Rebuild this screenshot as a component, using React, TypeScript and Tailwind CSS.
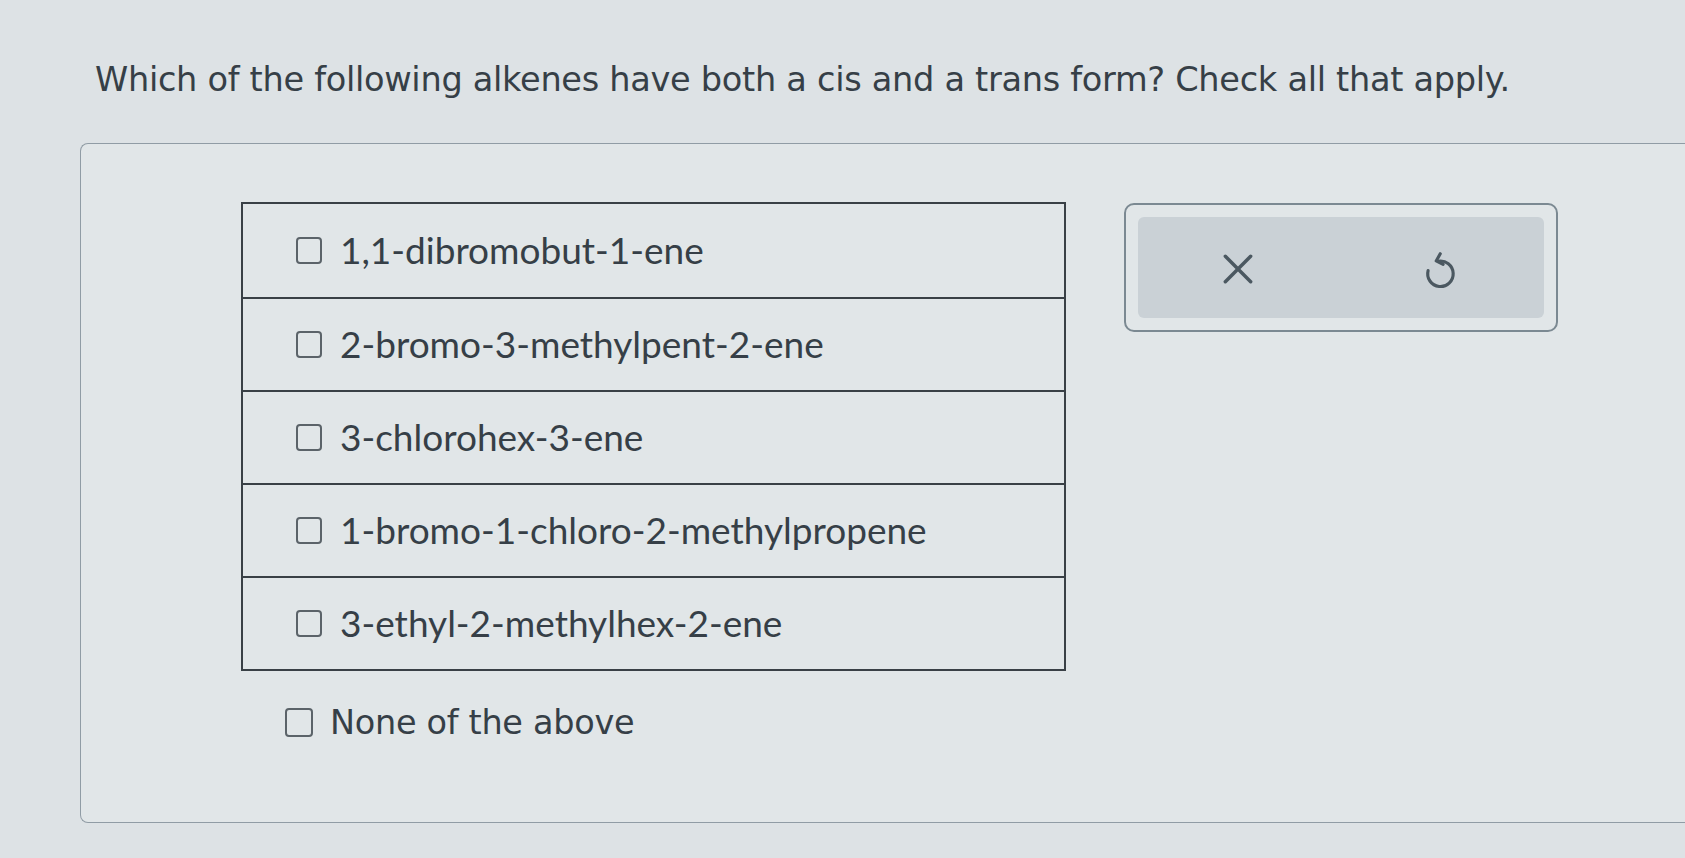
import React from 'react';

const options = [
  '1,1-dibromobut-1-ene',
  '2-bromo-3-methylpent-2-ene',
  '3-chlorohex-3-ene',
  '1-bromo-1-chloro-2-methylpropene',
  '3-ethyl-2-methylhex-2-ene',
];

function Checkbox({ size = 'w-[26px] h-[27px]' }: { size?: string }) {
  return <span className={`inline-block ${size} shrink-0 rounded-[4px] border-2 border-[#5b6369]`} />;
}

function ClearIcon() {
  return (
    <svg width="38" height="38" viewBox="0 0 24 24" fill="none" stroke="#4b5861" strokeWidth="2.2" strokeLinecap="round">
      <path d="M4 4l16 16M20 4L4 20" />
    </svg>
  );
}

function UndoIcon() {
  return (
    <svg width="36" height="45" viewBox="0 0 24 30" fill="none" stroke="#4b5861" strokeWidth="2.1" strokeLinecap="round" strokeLinejoin="round">
      <path d="M10 9.5a8.5 8.5 0 1 1-6.6 6.2" />
      <path d="M11.5 4.5L8.8 9.3l4.6 2.2" />
    </svg>
  );
}

export default function App() {
  return (
    <div className="w-[1685px] h-[858px] overflow-hidden bg-[#dde2e5] text-[#363f47] font-['DejaVu_Sans',sans-serif]">
      {/* question */}
      <div className="pt-[58px] pl-[95px] text-[33.6px] leading-[44px] tracking-[-0.3px]">
        Which of the following alkenes have both a cis and a trans form? Check all that apply.
      </div>

      {/* answer panel */}
      <div className="mt-[41px] ml-[80px] w-[1640px] h-[680px] rounded-l-[8px] border border-r-0 border-[#909ca5] bg-[#e1e6e8] pt-[58px] pl-[160px] flex items-start">
        <div className="w-[825px]">
          <div className="border-2 border-[#394046]">
            {options.map((o, i) => (
              <div
                key={o}
                className={`h-[93px] flex items-center gap-[18px] pl-[53px] ${i > 0 ? 'border-t-2 border-[#394046]' : ''}`}
              >
                <Checkbox />
                <span className="font-['Lato',sans-serif] text-[37px] leading-none pb-[2px]">{o}</span>
              </div>
            ))}
          </div>
          <div className="mt-[35px] pl-[44px] flex items-center gap-[17px]">
            <Checkbox size="w-[28px] h-[29px]" />
            <span className="text-[33.5px] leading-none tracking-[-0.3px]">None of the above</span>
          </div>
        </div>

        <div className="ml-[58px] mt-[1px] w-[434px] h-[129px] rounded-[10px] border-2 border-[#7b8992] p-[12px]">
          <div className="h-full rounded-[6px] bg-[#cad1d6] flex items-center">
            <div className="w-[200px] flex justify-center pt-[2px]">
              <ClearIcon />
            </div>
            <div className="flex-1 flex justify-center pt-[4px]">
              <UndoIcon />
            </div>
          </div>
        </div>
      </div>
    </div>
  );
}
